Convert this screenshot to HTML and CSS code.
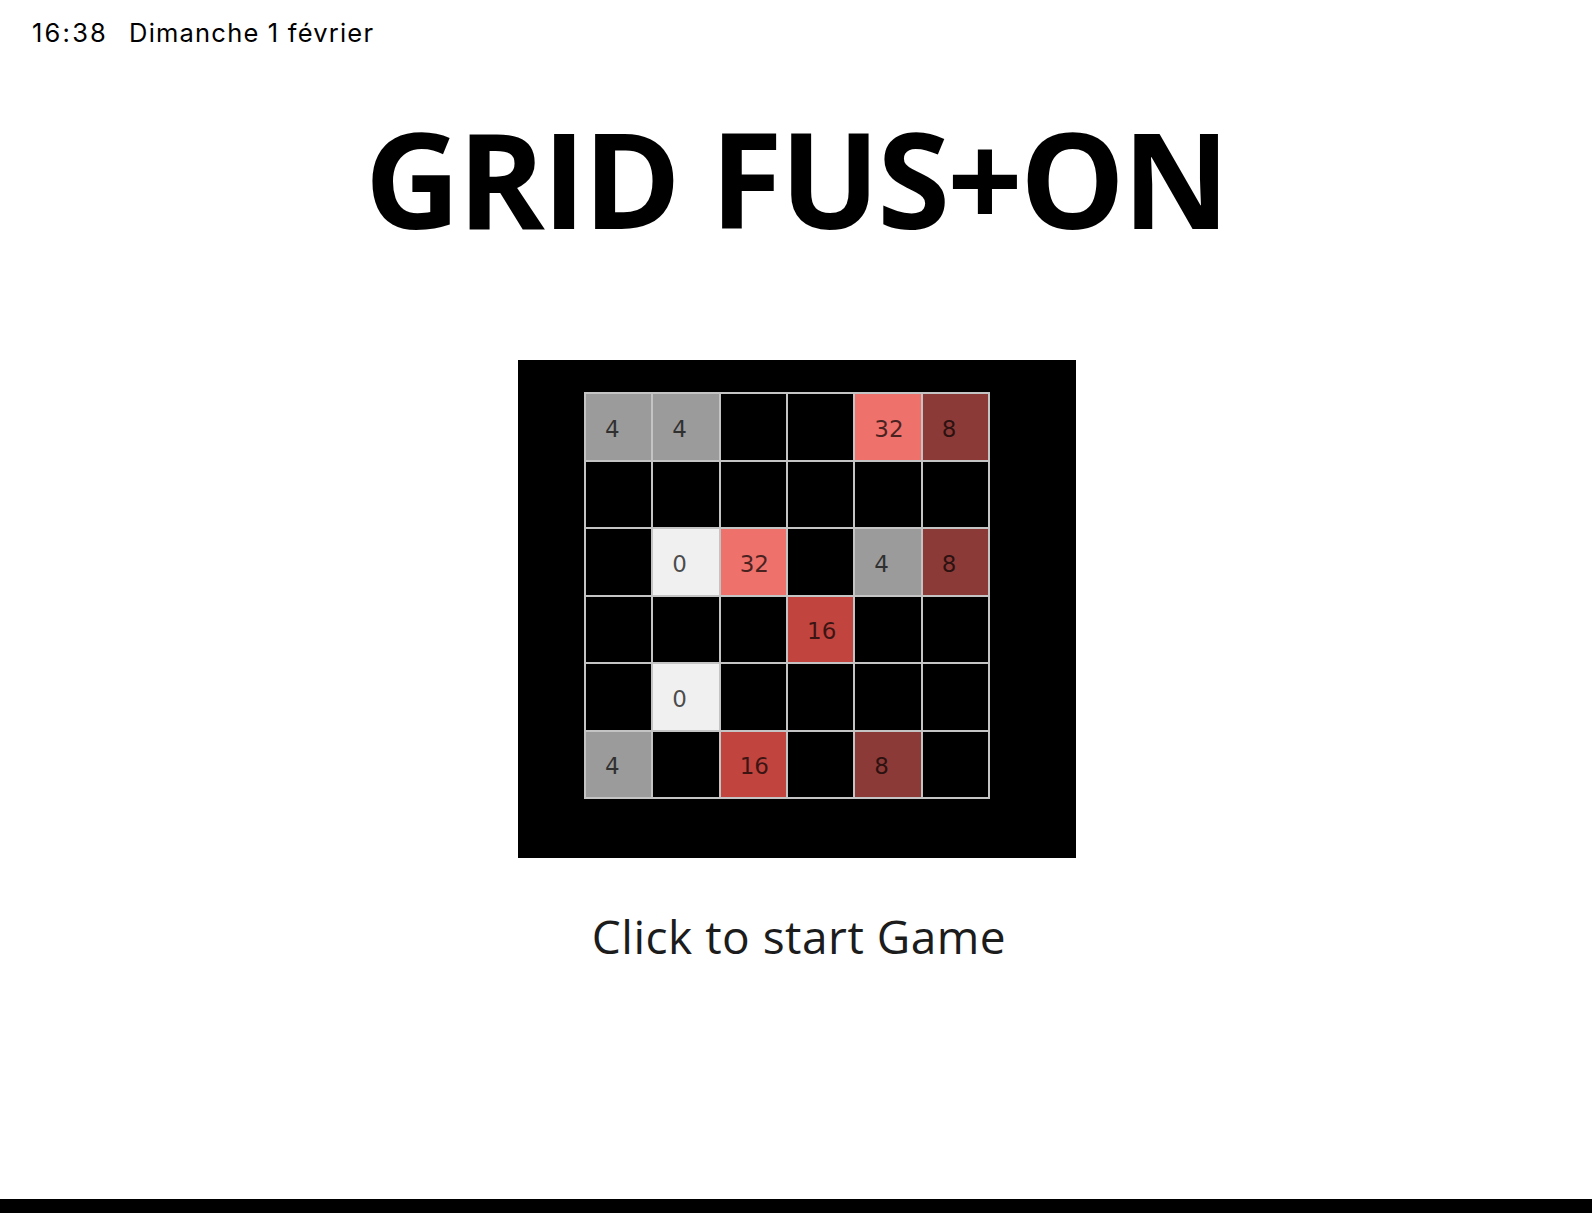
FILE: index.html
```html
<!DOCTYPE html>
<html lang="fr">
<head>
<meta charset="utf-8">
<title>Grid Fusion</title>
<link rel="stylesheet" href="styles.css">
</head>
<body>
<div class="page">
  <div class="status-bar">
    <span class="time">16:38</span>
    <span class="date">Dimanche 1 février</span>
  </div>
  <h1 class="title">GRID FUS+ON</h1>
  <div class="preview">
    <div class="board">
      <div class="cell c4">4</div><div class="cell c4">4</div><div class="cell"></div><div class="cell"></div><div class="cell c32">32</div><div class="cell c8">8</div>
      <div class="cell"></div><div class="cell"></div><div class="cell"></div><div class="cell"></div><div class="cell"></div><div class="cell"></div>
      <div class="cell"></div><div class="cell c0">0</div><div class="cell c32">32</div><div class="cell"></div><div class="cell c4">4</div><div class="cell c8">8</div>
      <div class="cell"></div><div class="cell"></div><div class="cell"></div><div class="cell c16">16</div><div class="cell"></div><div class="cell"></div>
      <div class="cell"></div><div class="cell c0">0</div><div class="cell"></div><div class="cell"></div><div class="cell"></div><div class="cell"></div>
      <div class="cell c4">4</div><div class="cell"></div><div class="cell c16">16</div><div class="cell"></div><div class="cell c8">8</div><div class="cell"></div>
    </div>
  </div>
  <p class="start">Click to start Game</p>
  <div class="home-bar"></div>
</div>
</body>
</html>
```

FILE: styles.css
```css
html, body {
  margin: 0;
  padding: 0;
  background: #ffffff;
}

.page {
  min-height: 100vh;
  display: flex;
  flex-direction: column;
  align-items: center;
}

.status-bar {
  align-self: stretch;
  display: flex;
  gap: 21px;
  padding: 18px 0 0 32px;
  font-family: Inter, "Liberation Sans", sans-serif;
  font-size: 25.5px;
  line-height: 30px;
  letter-spacing: 1.2px;
  color: #000;
}

.time {
  letter-spacing: 2.2px;
}

.title {
  margin: 64px 0 0;
  font-family: "Open Sans", sans-serif;
  font-weight: 700;
  font-size: 132px;
  line-height: 132px;
  letter-spacing: -2.6px;
  color: #000;
}

.preview {
  margin-top: 116px;
  margin-left: 2px;
  width: 558px;
  height: 498px;
  box-sizing: border-box;
  padding: 32px 86px 59px 66px;
  background: #000;
}

.board {
  width: 406px;
  height: 407px;
  box-sizing: border-box;
  display: grid;
  grid-template-columns: repeat(6, 1fr);
  grid-template-rows: repeat(6, 1fr);
  gap: 2px;
  padding: 2px;
  background: #c4c4c4;
}

.cell {
  background: #000;
  display: flex;
  align-items: center;
  justify-content: flex-start;
  padding: 4px 0 0 19px;
  box-sizing: border-box;
  font-family: "DejaVu Sans", sans-serif;
  font-size: 23px;
  color: rgba(0, 0, 0, 0.7);
}

.c0 { background: #f0f0f0; }
.c4 { background: #9b9b9b; }
.c8 { background: #8c3a37; }
.c16 { background: #c1443f; }
.c32 { background: #ee716c; }

.start {
  margin: 50px 0 0;
  margin-left: 6px;
  font-family: "Open Sans", sans-serif;
  font-size: 46px;
  line-height: 56px;
  letter-spacing: 0.5px;
  color: #1c1c1c;
}

.home-bar {
  margin-top: auto;
  align-self: stretch;
  height: 14px;
  background: #000;
}
```
